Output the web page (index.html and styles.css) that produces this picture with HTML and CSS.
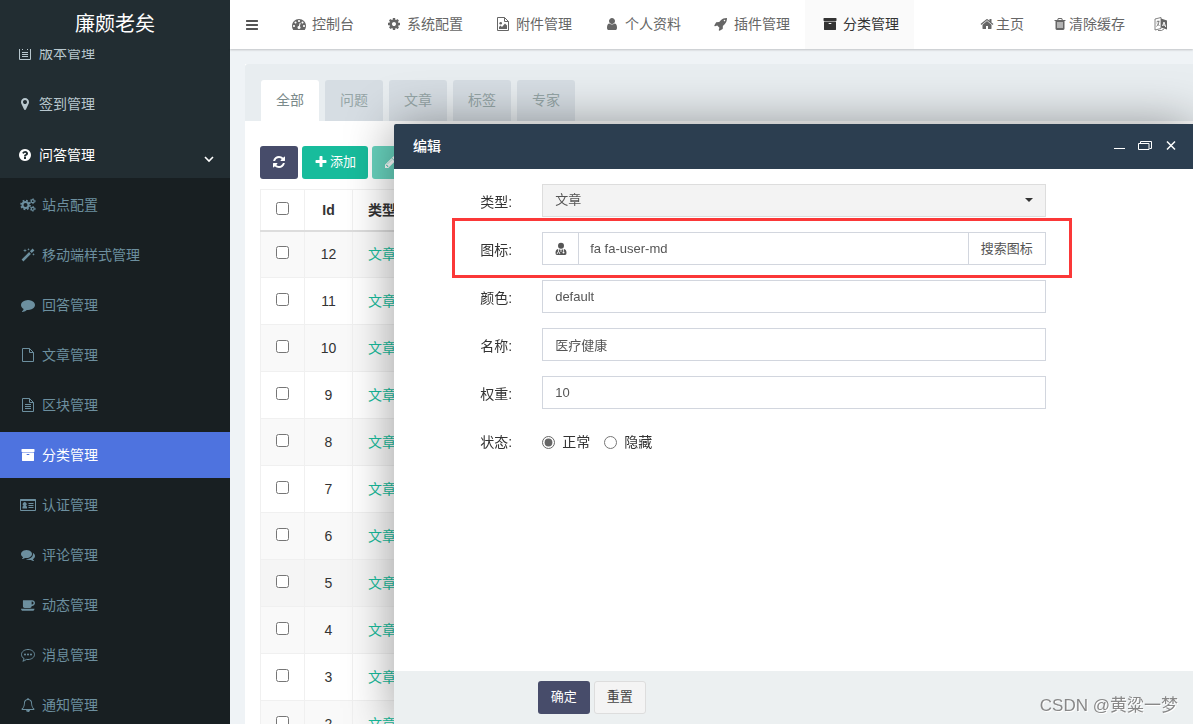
FILE: index.html
```html
<!DOCTYPE html>
<html lang="zh-CN">

<head>
    <meta charset="UTF-8">
    <meta name="viewport" content="width=device-width, initial-scale=1.0">
    <title>分类管理</title>
    <link rel="stylesheet" href="styles.css">
</head>

<body>
    <!-- Icon sprite -->
    <svg class="sprite" aria-hidden="true">
        <symbol id="i-bars" viewBox="0 0 1792 1792"><path d="M1664 1344v128q0 26-19 45t-45 19h-1408q-26 0-45-19t-19-45v-128q0-26 19-45t45-19h1408q26 0 45 19t19 45zm0-512v128q0 26-19 45t-45 19h-1408q-26 0-45-19t-19-45v-128q0-26 19-45t45-19h1408q26 0 45 19t19 45zm0-512v128q0 26-19 45t-45 19h-1408q-26 0-45-19t-19-45v-128q0-26 19-45t45-19h1408q26 0 45 19t19 45z"/></symbol>
        <symbol id="i-plus" viewBox="0 0 1792 1792"><path d="M1600 736v192q0 40-28 68t-68 28h-416v416q0 40-28 68t-68 28h-192q-40 0-68-28t-28-68v-416h-416q-40 0-68-28t-28-68v-192q0-40 28-68t68-28h416v-416q0-40 28-68t68-28h192q40 0 68 28t28 68v416h416q40 0 68 28t28 68z"/></symbol>
        <symbol id="i-refresh" viewBox="0 0 1792 1792"><path d="M1639 1056q0 5-1 7-64 268-268 434.5t-478 166.5q-146 0-282.5-55t-243.5-157l-129 129q-19 19-45 19t-45-19-19-45v-448q0-26 19-45t45-19h448q26 0 45 19t19 45-19 45l-137 137q71 66 161 102t187 36q134 0 250-65t186-179q11-17 53-117 8-23 30-23h192q13 0 22.5 9.5t9.5 22.5zm25-800v448q0 26-19 45t-45 19h-448q-26 0-45-19t-19-45 19-45l138-138q-148-137-349-137-134 0-250 65t-186 179q-11 17-53 117-8 23-30 23h-199q-13 0-22.5-9.5t-9.5-22.5v-7q65-268 270-434.5t480-166.5q146 0 284 55.5t245 156.5l130-129q19-19 45-19t45 19 19 45z"/></symbol>
        <symbol id="i-pencil" viewBox="0 0 1792 1792"><path d="M491 1536l91-91-235-235-91 91v107h128v128h107zm523-928q0-22-22-22-10 0-17 7l-542 542q-7 7-7 17 0 22 22 22 10 0 17-7l542-542q7-7 7-17zm-54-192l416 416-832 832h-416v-416zm683 96q0 53-37 90l-166 166-416-416 166-165q36-38 90-38 53 0 91 38l235 234q37 39 37 91z"/></symbol>
        <symbol id="i-home" viewBox="0 0 1792 1792"><path d="M1472 992v480q0 26-19 45t-45 19h-384v-384h-256v384h-384q-26 0-45-19t-19-45v-480q0-1 .5-3t.5-3l575-474 575 474q1 2 1 6zm223-69l-62 74q-8 9-21 11h-3q-13 0-21-7l-692-577-692 577q-12 8-24 7-13-2-21-11l-62-74q-8-10-7-23.5t11-21.5l719-599q32-26 76-26t76 26l244 204v-195q0-14 9-23t23-9h192q14 0 23 9t9 23v408l219 182q10 8 11 21.5t-7 23.5z"/></symbol>
        <symbol id="i-cog" viewBox="0 0 1792 1792"><path d="M1152 896q0-106-75-181t-181-75-181 75-75 181 75 181 181 75 181-75 75-181zm512-109v222q0 12-8 23t-20 13l-185 28q-19 54-39 91 35 50 107 138 10 12 10 25t-9 23q-27 37-99 108t-94 71q-12 0-26-9l-138-108q-44 23-91 38-16 136-29 186-7 28-36 28h-222q-14 0-24.5-8.5t-11.5-21.5l-28-184q-49-16-90-37l-141 107q-10 9-25 9-14 0-25-11-126-114-165-168-7-10-7-23 0-12 8-23 15-21 51-66.5t54-70.5q-27-50-41-99l-183-27q-13-2-21-12.5t-8-23.5v-222q0-12 8-23t19-13l186-28q14-46 39-92-40-57-107-138-10-12-10-24 0-10 9-23 26-36 98.5-107.5t94.5-71.5q13 0 26 10l138 107q44-23 91-38 16-136 29-186 7-28 36-28h222q14 0 24.5 8.5t11.5 21.5l28 184q49 16 90 37l142-107q9-9 24-9 13 0 25 10 129 119 165 170 7 8 7 22 0 12-8 23-15 21-51 66.5t-54 70.5q26 50 41 98l183 28q13 2 21 12.5t8 23.5z"/></symbol>
        <symbol id="i-marker" viewBox="0 0 1792 1792"><path d="M1152 640q0-106-75-181t-181-75-181 75-75 181 75 181 181 75 181-75 75-181zm256 0q0 109-33 179l-364 774q-16 33-47.5 52t-67.5 19-67.5-19-46.5-52l-365-774q-33-70-33-179 0-212 150-362t362-150 362 150 150 362z"/></symbol>
        <symbol id="i-archive" viewBox="0 0 1792 1792"><path d="M1088 832q0-26-19-45t-45-19h-256q-26 0-45 19t-19 45 19 45 45 19h256q26 0 45-19t19-45zm576-192v960q0 26-19 45t-45 19h-1408q-26 0-45-19t-19-45v-960q0-26 19-45t45-19h1408q26 0 45 19t19 45zm64-448v256q0 26-19 45t-45 19h-1536q-26 0-45-19t-19-45v-256q0-26 19-45t45-19h1536q26 0 45 19t19 45z"/></symbol>
        <symbol id="i-comment" viewBox="0 0 1792 1792"><path d="M1792 896q0 174-120 321.5t-326 233-450 85.5q-70 0-145-8-198 175-460 242-49 14-114 22-17 2-30.5-9t-17.5-29v-1q-3-4-.5-12t2-10 4.5-9.5l6-9 7-8.5 8-9q7-8 31-34.5t34.5-38 31-39.5 32.5-51 27-59 26-76q-157-89-247.5-220t-90.5-281q0-130 71-248.5t191-204.5 286-136.5 348-50.5q244 0 450 85.5t326 233 120 321.5z"/></symbol>
        <symbol id="i-comments" viewBox="0 0 1792 1792"><path d="M1408 768q0 139-94 257t-256.5 186.5-353.5 68.5q-86 0-176-16-124 88-278 128-36 9-86 16h-3q-11 0-20.5-8t-11.5-21q-1-3-1-6.5t.5-6.5 2-6l2.5-5 3.5-5.5 4-5 4.5-5 4-4.5q5-6 23-25t26-29.5 22.5-29 25-38.5 20.5-44q-124-72-195-177t-71-224q0-139 94-257t256.5-186.5 353.5-68.5 353.5 68.5 256.5 186.5 94 257zm384 256q0 120-71 224.5t-195 176.5q10 24 20.5 44t25 38.5 22.5 29 26 29.5 23 25q1 1 4 4.5t4.5 5 4 5 3.5 5.5l2.5 5 2 6 .5 6.5-1 6.5q-3 14-13 22t-22 7q-50-7-86-16-154-40-278-128-90 16-176 16-271 0-472-132 58 4 88 4 161 0 309-45t264-129q125-92 192-212t67-254q0-77-23-152 129 71 204 178t75 230z"/></symbol>
        <symbol id="i-user" viewBox="0 0 1792 1792"><path d="M1536 1399q0 109-62.5 187t-150.5 78h-854q-88 0-150.5-78t-62.5-187q0-85 8.5-160.5t31.5-152 58.5-131 94-89 134.5-34.5q131 128 313 128t313-128q76 0 134.5 34.5t94 89 58.5 131 31.5 152 8.5 160.5zm-256-887q0 159-112.5 271.5t-271.5 112.5-271.5-112.5-112.5-271.5 112.5-271.5 271.5-112.5 271.5 112.5 112.5 271.5z"/></symbol>
        <symbol id="i-question" viewBox="0 0 1792 1792"><path d="M1024 1376v-192q0-14-9-23t-23-9h-192q-14 0-23 9t-9 23v192q0 14 9 23t23 9h192q14 0 23-9t9-23zm256-672q0-88-55.5-163t-138.5-116-170-41q-243 0-371 213-15 24 8 42l132 100q7 6 19 6 16 0 25-12 53-68 86-92 34-24 86-24 48 0 85.5 26t37.5 59q0 38-20 61t-68 45q-63 28-115.5 86.5t-52.5 125.5v36q0 14 9 23t23 9h192q14 0 23-9t9-23q0-19 21.5-49.5t54.5-49.5q32-18 49-28.5t46-35 44.5-48 28-60.5 12.5-81zm384 192q0 209-103 385.5t-279.5 279.5-385.5 103-385.5-103-279.5-279.5-103-385.5 103-385.5 279.5-279.5 385.5-103 385.5 103 279.5 279.5 103 385.5z"/></symbol>
        <symbol id="i-dashboard" viewBox="0 0 1792 1792"><path d="M384 1152q0-53-37.5-90.5t-90.5-37.5-90.5 37.5-37.5 90.5 37.5 90.5 90.5 37.5 90.5-37.5 37.5-90.5zm192-448q0-53-37.5-90.5t-90.5-37.5-90.5 37.5-37.5 90.5 37.5 90.5 90.5 37.5 90.5-37.5 37.5-90.5zm428 481l101-382q6-26-7.5-48.5t-38.5-29.5-48 6.5-30 39.5l-101 382q-60 5-107 43.5t-63 98.5q-20 77 20 146t117 89 146-20 89-117q16-60-6-117t-72-91zm660-33q0-53-37.5-90.5t-90.5-37.5-90.5 37.5-37.5 90.5 37.5 90.5 90.5 37.5 90.5-37.5 37.5-90.5zm-640-640q0-53-37.5-90.5t-90.5-37.5-90.5 37.5-37.5 90.5 37.5 90.5 90.5 37.5 90.5-37.5 37.5-90.5zm448 192q0-53-37.5-90.5t-90.5-37.5-90.5 37.5-37.5 90.5 37.5 90.5 90.5 37.5 90.5-37.5 37.5-90.5zm320 448q0 261-141 483-19 29-54 29h-1402q-35 0-54-29-141-221-141-483 0-182 71-348t191-286 286-191 348-71 348 71 286 191 191 286 71 348z"/></symbol>
        <symbol id="i-rocket" viewBox="0 0 1792 1792"><path d="M1440 448q0-40-28-68t-68-28-68 28-28 68 28 68 68 28 68-28 28-68zm224-288q0 249-75.5 430.5t-253.5 360.5q-81 80-195 176l-20 379q-2 16-16 26l-384 224q-7 4-16 4-12 0-23-9l-64-64q-13-14-8-32l85-276-281-281-276 85q-3 1-9 1-14 0-23-9l-64-64q-17-19-5-39l224-384q10-14 26-16l379-20q96-114 176-195 188-187 358-258t431-71q14 0 24 9.5t10 22.5z"/></symbol>
        <symbol id="i-bell" viewBox="0 0 1792 1792"><path d="M912 1696q0-16-16-16-59 0-101.5-42.5t-42.5-101.5q0-16-16-16t-16 16q0 73 51.5 124.5t124.5 51.5q16 0 16-16zm-666-288h1300q-266-300-266-832 0-51-24-105t-69-103-121.5-80.5-169.5-31.5-169.5 31.5-121.5 80.5-69 103-24 105q0 532-266 832zm1482 0q0 52-38 90t-90 38h-448q0 106-75 181t-181 75-181-75-75-181h-448q-52 0-90-38t-38-90q50-42 91-88t85-119.5 74.5-158.5 50-206 19.5-260q0-152 117-282.5t307-158.5q-8-19-8-39 0-40 28-68t68-28 68 28 28 68q0 20-8 39 190 28 307 158.5t117 282.5q0 139 19.5 260t50 206 74.5 158.5 85 119.5 91 88z"/></symbol>
        <symbol id="i-coffee" viewBox="0 0 1856 1792"><path d="M1664 640q0-80-56-136t-136-56h-64v384h64q80 0 136-56t56-136zm-1664 768h1792q0 106-75 181t-181 75h-1280q-106 0-181-75t-75-181zm1856-768q0 159-112.5 271.5t-271.5 112.5h-64v32q0 92-66 158t-158 66h-704q-92 0-158-66t-66-158v-736q0-26 19-45t45-19h1152q159 0 271.5 112.5t112.5 271.5z"/></symbol>
        <symbol id="i-trash" viewBox="0 0 1792 1792"><path d="M704 1376v-704q0-14-9-23t-23-9h-64q-14 0-23 9t-9 23v704q0 14 9 23t23 9h64q14 0 23-9t9-23zm256 0v-704q0-14-9-23t-23-9h-64q-14 0-23 9t-9 23v704q0 14 9 23t23 9h64q14 0 23-9t9-23zm256 0v-704q0-14-9-23t-23-9h-64q-14 0-23 9t-9 23v704q0 14 9 23t23 9h64q14 0 23-9t9-23zm-544-992h448l-48-117q-7-9-17-11h-317q-10 2-17 11zm928 32v64q0 14-9 23t-23 9h-96v948q0 83-47 143.5t-113 60.5h-832q-66 0-113-58.5t-47-141.5v-952h-96q-14 0-23-9t-9-23v-64q0-14 9-23t23-9h309l70-167q15-37 54-63t79-26h320q40 0 79 26t54 63l70 167h309q14 0 23 9t9 23z"/></symbol>
        <symbol id="i-file" viewBox="0 0 14 14"><path fill="none" stroke="currentColor" d="M1.500.5h7l4 4v9h-11zM8.500.5v4h4"/></symbol>
        <symbol id="i-file-text" viewBox="0 0 14 14"><path fill="none" stroke="currentColor" d="M1.500.5h7l4 4v9h-11zM8.500.5v4h4M4 6.500h6M4 8.500h6M4 10.500h6"/></symbol>
        <symbol id="i-file-image" viewBox="0 0 14 14"><path fill="none" stroke="currentColor" d="M1.500.5h7l4 4v9h-11zM8.500.5v4h4"/><circle cx="4.700" cy="6.200" r="1.300"/><path d="M3 12v-2l1.500-1.500L6 10l3-3.500 2 2V12z"/></symbol>
        <symbol id="i-list" viewBox="0 0 14 14"><path fill="none" stroke="currentColor" d="M1.500 2.500h11v11h-11zM4 6.500h6M4 8.500h6M4 10.500h6M4.500 1v3M9.500 1v3"/></symbol>
        <symbol id="i-cogs" viewBox="0 0 16 14"><g fill="none" stroke="currentColor"><circle cx="5.500" cy="7" r="3" stroke-width="2"/><circle cx="5.500" cy="7" r="4.500" stroke-width="1.600" stroke-dasharray="1.800 1.734"/><circle cx="12.700" cy="3.200" r="1.500" stroke-width="1.200"/><circle cx="12.700" cy="3.200" r="2.400" stroke-width="1" stroke-dasharray="1.200 1.313"/><circle cx="12.700" cy="10.800" r="1.500" stroke-width="1.200"/><circle cx="12.700" cy="10.800" r="2.400" stroke-width="1" stroke-dasharray="1.200 1.313"/></g></symbol>
        <symbol id="i-magic" viewBox="0 0 14 14"><path fill="none" stroke="currentColor" stroke-width="2.600" d="M1.500 12.500l7.500-7.500M9.800 4.200l2.700-2.700"/><path d="M4 .5l.5 1.500 1.500.5-1.500.5L4 4.500 3.500 3 2 2.500 3.500 2zM7.500 0l.4.900.9.400-.9.400-.4.900-.4-.9-.9-.4.900-.4zM12.500 5l.4 1 1 .4-1 .4-.4 1-.4-1-1-.4 1-.4z"/></symbol>
        <symbol id="i-commenting" viewBox="0 0 14 14"><path fill="none" stroke="currentColor" d="M7 1.500c3.600 0 6.500 2.200 6.500 5s-2.900 5-6.500 5l-1.600-.1C4.200 12.300 3 13 1.800 13.200c.7-.7 1.200-1.500 1.300-2.600C1.500 9.800.5 8.200.5 6.500c0-2.800 2.900-5 6.500-5z"/><circle cx="4" cy="6.500" r="1"/><circle cx="7" cy="6.500" r="1"/><circle cx="10" cy="6.500" r="1"/></symbol>
        <symbol id="i-card" viewBox="0 0 16 14"><path fill="none" stroke="currentColor" d="M.5 1.500h15v11H.5zM8.500 5.500h5M8.500 7.500h5M8.500 9.500h5"/><path d="M.5 1h15v2H.5zM2.500 10.500V9q0-1 1.300-1.200a1.900 1.900 0 1 1 1.800 0Q7 8 7 9v1.500z"/></symbol>
        <symbol id="i-user-md" viewBox="0 0 14 14"><circle cx="7" cy="3.700" r="3"/><path d="M4 7l3 1 3-1q2.500.5 2.500 4 0 2-1.500 2H3q-1.500 0-1.500-2 0-3.500 2.500-4z"/><path fill="none" stroke="#fff" stroke-width=".8" d="M4.500 7v3M3.300 12v-1q0-1 1.200-1t1.200 1v1M9.500 7v2.500M7 8v2"/><circle cx="9.500" cy="10.500" r="1" fill="#fff"/></symbol>
        <symbol id="i-language" viewBox="0 0 14 14"><path fill="none" stroke="currentColor" stroke-width=".8" d="M1 2l6-1.500v11L1 13zM2.500 5l3-.8M4 3.500v1.200M2.500 9.500q2-1.500 2.500-5M3 6.500l2.500 2.500M4 13.500q4 .8 6-1.500"/><path d="M7 1.500l6 2v9l-6-2z"/><path fill="none" stroke="#fff" stroke-width=".9" d="M8.500 9L10 5l1.700 5M9 7.800l2.300.6"/></symbol>
        <symbol id="i-chevron" viewBox="0 0 10 10"><path fill="none" stroke="currentColor" stroke-width="1.600" d="M1 3l4 4 4-4"/></symbol>
        <symbol id="i-min" viewBox="0 0 14 14"><path fill="none" stroke="currentColor" d="M2 9.500h11"/></symbol>
        <symbol id="i-restore" viewBox="0 0 14 14"><path fill="none" stroke="currentColor" d="M.5 4.500h10.500v6H.5zM2.500 4V2.500h11v7H11.500"/></symbol>
        <symbol id="i-close" viewBox="0 0 14 14"><path fill="none" stroke="currentColor" stroke-width="1.500" d="M3 2.500l8 8M11 2.500l-8 8"/></symbol>
    </svg>

    <div class="wrapper">
        <!-- Sidebar -->
        <aside class="sidebar">
            <a href="#" class="logo">廉颇老矣</a>
            <nav class="menu">
                <a href="#" class="menu-item"><svg class="icon"><use href="#i-list"/></svg>版本管理</a>
                <a href="#" class="menu-item"><svg class="icon"><use href="#i-marker"/></svg>签到管理</a>
                <a href="#" class="menu-item open"><svg class="icon"><use href="#i-question"/></svg>问答管理<svg class="arrow"><use href="#i-chevron"/></svg></a>
                <div class="submenu">
                    <a href="#" class="menu-item"><svg class="icon icon-wide"><use href="#i-cogs"/></svg>站点配置</a>
                    <a href="#" class="menu-item"><svg class="icon"><use href="#i-magic"/></svg>移动端样式管理</a>
                    <a href="#" class="menu-item"><svg class="icon"><use href="#i-comment"/></svg>回答管理</a>
                    <a href="#" class="menu-item"><svg class="icon"><use href="#i-file"/></svg>文章管理</a>
                    <a href="#" class="menu-item"><svg class="icon"><use href="#i-file-text"/></svg>区块管理</a>
                    <a href="#" class="menu-item active"><svg class="icon"><use href="#i-archive"/></svg>分类管理</a>
                    <a href="#" class="menu-item"><svg class="icon icon-wide"><use href="#i-card"/></svg>认证管理</a>
                    <a href="#" class="menu-item"><svg class="icon"><use href="#i-comments"/></svg>评论管理</a>
                    <a href="#" class="menu-item"><svg class="icon"><use href="#i-coffee"/></svg>动态管理</a>
                    <a href="#" class="menu-item"><svg class="icon"><use href="#i-commenting"/></svg>消息管理</a>
                    <a href="#" class="menu-item"><svg class="icon"><use href="#i-bell"/></svg>通知管理</a>
                </div>
            </nav>
        </aside>

        <div class="main">
            <!-- Top bar -->
            <header class="navbar">
                <button type="button" class="nav-toggle" aria-label="菜单"><svg class="icon"><use href="#i-bars"/></svg></button>
                <nav class="nav-tabs">
                    <a href="#" class="nav-link"><svg class="icon"><use href="#i-dashboard"/></svg>控制台</a>
                    <a href="#" class="nav-link"><svg class="icon"><use href="#i-cog"/></svg>系统配置</a>
                    <a href="#" class="nav-link"><svg class="icon"><use href="#i-file-image"/></svg>附件管理</a>
                    <a href="#" class="nav-link"><svg class="icon"><use href="#i-user"/></svg>个人资料</a>
                    <a href="#" class="nav-link"><svg class="icon"><use href="#i-rocket"/></svg>插件管理</a>
                    <a href="#" class="nav-link active"><svg class="icon"><use href="#i-archive"/></svg>分类管理</a>
                </nav>
                <div class="nav-right">
                    <a href="#" class="nav-link"><svg class="icon"><use href="#i-home"/></svg>主页</a>
                    <a href="#" class="nav-link"><svg class="icon"><use href="#i-trash"/></svg>清除缓存</a>
                    <a href="#" class="nav-link" aria-label="语言"><svg class="icon"><use href="#i-language"/></svg></a>
                </div>
            </header>

            <!-- List panel -->
            <section class="panel">
                <div class="panel-heading">
                    <a href="#" class="tab active">全部</a>
                    <a href="#" class="tab">问题</a>
                    <a href="#" class="tab">文章</a>
                    <a href="#" class="tab">标签</a>
                    <a href="#" class="tab">专家</a>
                </div>
                <div class="panel-body">
                    <div class="toolbar">
                        <button type="button" class="btn btn-primary" aria-label="刷新"><svg class="icon"><use href="#i-refresh"/></svg></button>
                        <button type="button" class="btn btn-success"><svg class="icon"><use href="#i-plus"/></svg>添加</button>
                        <button type="button" class="btn btn-success" aria-label="编辑" disabled><svg class="icon"><use href="#i-pencil"/></svg></button>
                    </div>
                    <table class="table">
                        <thead>
                            <tr><th class="col-check"><input type="checkbox" aria-label="全选"></th><th class="col-id">Id</th><th class="col-type">类型</th></tr>
                        </thead>
                        <tbody>
                            <tr><td><input type="checkbox" aria-label="12"></td><td>12</td><td class="col-type"><a href="#">文章</a></td></tr>
                            <tr><td><input type="checkbox" aria-label="11"></td><td>11</td><td class="col-type"><a href="#">文章</a></td></tr>
                            <tr><td><input type="checkbox" aria-label="10"></td><td>10</td><td class="col-type"><a href="#">文章</a></td></tr>
                            <tr><td><input type="checkbox" aria-label="9"></td><td>9</td><td class="col-type"><a href="#">文章</a></td></tr>
                            <tr><td><input type="checkbox" aria-label="8"></td><td>8</td><td class="col-type"><a href="#">文章</a></td></tr>
                            <tr><td><input type="checkbox" aria-label="7"></td><td>7</td><td class="col-type"><a href="#">文章</a></td></tr>
                            <tr><td><input type="checkbox" aria-label="6"></td><td>6</td><td class="col-type"><a href="#">文章</a></td></tr>
                            <tr class="hover"><td><input type="checkbox" aria-label="5"></td><td>5</td><td class="col-type"><a href="#">文章</a></td></tr>
                            <tr><td><input type="checkbox" aria-label="4"></td><td>4</td><td class="col-type"><a href="#">文章</a></td></tr>
                            <tr><td><input type="checkbox" aria-label="3"></td><td>3</td><td class="col-type"><a href="#">文章</a></td></tr>
                            <tr><td><input type="checkbox" aria-label="2"></td><td>2</td><td class="col-type"><a href="#">文章</a></td></tr>
                        </tbody>
                    </table>
                </div>
            </section>
        </div>
    </div>

    <!-- Edit window -->
    <form class="dialog">
        <div class="dialog-title">
            <span>编辑</span>
            <div class="dialog-tools">
                <button type="button" aria-label="最小化"><svg class="icon"><use href="#i-min"/></svg></button>
                <button type="button" aria-label="还原"><svg class="icon"><use href="#i-restore"/></svg></button>
                <button type="button" aria-label="关闭"><svg class="icon"><use href="#i-close"/></svg></button>
            </div>
        </div>
        <div class="dialog-body">
            <div class="form-row">
                <label for="type">类型:</label>
                <div class="select-wrap">
                    <select id="type" class="form-control"><option>文章</option></select>
                </div>
            </div>
            <div class="form-row marked">
                <label for="icon">图标:</label>
                <div class="input-group">
                    <span class="addon"><svg class="icon"><use href="#i-user-md"/></svg></span>
                    <input type="text" id="icon" class="form-control" value="fa fa-user-md">
                    <button type="button" class="addon-btn">搜索图标</button>
                </div>
            </div>
            <div class="form-row">
                <label for="color">颜色:</label>
                <input type="text" id="color" class="form-control" value="default">
            </div>
            <div class="form-row">
                <label for="name">名称:</label>
                <input type="text" id="name" class="form-control" value="医疗健康">
            </div>
            <div class="form-row">
                <label for="weigh">权重:</label>
                <input type="text" id="weigh" class="form-control" value="10">
            </div>
            <div class="form-row">
                <span class="row-label">状态:</span>
                <div class="radios">
                    <label><input type="radio" name="status" checked>正常</label>
                    <label><input type="radio" name="status">隐藏</label>
                </div>
            </div>
        </div>
        <div class="dialog-footer">
            <button type="submit" class="btn btn-primary">确定</button>
            <button type="reset" class="btn btn-default">重置</button>
        </div>
    </form>

    <div class="watermark">CSDN @黄粱一梦</div>
</body>

</html>
```
FILE: styles.css
```css
* {
    box-sizing: border-box;
}

body {
    margin: 0;
    font-family: "Liberation Sans", "Noto Sans CJK SC", sans-serif;
    font-size: 14px;
    line-height: 20px;
    color: #333;
    background: #eff3f6;
    overflow: hidden;
}

a {
    color: #18bc9c;
    text-decoration: none;
}

button,
input,
select {
    font-family: inherit;
    font-size: 13px;
}

button {
    cursor: pointer;
}

.sprite {
    display: none;
}

.icon {
    width: 14px;
    height: 14px;
    flex: none;
    fill: currentColor;
}

.wrapper {
    display: flex;
    height: 100vh;
    overflow: hidden;
}

/* Sidebar */
.sidebar {
    width: 230px;
    flex: none;
    background: #222d32;
    overflow: hidden;
}

.logo {
    display: block;
    position: relative;
    z-index: 1;
    height: 49px;
    line-height: 48px;
    text-align: center;
    font-size: 20px;
    color: #fff;
    background: #222d32;
}

/* the list is scrolled a little under the logo */
.menu {
    display: flex;
    flex-direction: column;
    gap: 5px;
    margin-top: -19px;
}

.menu-item {
    display: flex;
    align-items: center;
    gap: 7px;
    height: 46px;
    flex: none;
    padding: 0 16px 0 18px;
    color: #b8c7ce;
}

.menu-item.open {
    color: #fff;
}

.arrow {
    width: 10px;
    height: 10px;
    margin: 8px 0 0 auto;
}

.submenu {
    display: flex;
    flex-direction: column;
    gap: 4px;
    margin-top: -5px;
    padding-top: 4px;
    background: #181f22;
}

.submenu .menu-item {
    padding-left: 21px;
    color: #6c8f9f;
}

.submenu .menu-item.active {
    color: #fff;
    background: #4e73df;
}

.icon-wide {
    width: 16px;
    margin: 0 -1px;
}

/* Top bar */
.main {
    flex: 1;
    min-width: 0;
}

.navbar {
    display: flex;
    height: 49px;
    background: #fff;
    box-shadow: 0 1px 2px rgba(0, 0, 0, 0.2);
}

.nav-toggle {
    padding: 0 15px;
    border: none;
    background: none;
    color: #555;
    line-height: 0;
}

.nav-tabs,
.nav-right {
    display: flex;
}

.nav-right {
    margin-left: auto;
    padding-right: 10px;
}

.nav-link {
    display: flex;
    align-items: center;
    gap: 6px;
    padding: 0 15px 2px 18px;
    color: #666;
    white-space: nowrap;
}

.nav-right .nav-link {
    gap: 2px;
    padding: 0 15px 2px 14px;
}

.nav-link.active {
    color: #333;
    background: #fafafa;
}

/* Panel */
.panel {
    margin: 15px 0 0 15px;
    background: #fff;
}

.panel-heading {
    display: flex;
    gap: 6px;
    padding: 16px 16px 0;
    background: #e8edf0;
    border-radius: 3px 0 0 0;
}

.tab {
    height: 41px;
    padding: 0 15px;
    line-height: 40px;
    color: #95a5a6;
    background: #d6dde3;
    border-radius: 3px 3px 0 0;
}

.tab.active {
    color: #7b8a8b;
    background: #fff;
}

.panel-body {
    padding: 25px 15px;
}

.toolbar {
    display: flex;
    gap: 4px;
    margin-bottom: 10px;
}

.btn {
    display: flex;
    align-items: center;
    gap: 2px;
    height: 33px;
    padding: 0 13px 2px;
    border: none;
    border-radius: 3px;
    line-height: 20px;
}

.toolbar .btn {
    padding: 0 12px 2px;
}

.btn-primary {
    color: #fff;
    background: #474c6a;
}

.btn-success {
    color: #fff;
    background: #18bc9c;
}

.btn-success:disabled {
    opacity: 0.65;
}

.btn-default {
    padding: 0 12px 2px;
    color: #444;
    background: #f4f4f4;
    border: 1px solid #ddd;
}

.table {
    width: 100%;
    border-collapse: collapse;
    text-align: center;
}

.table th,
.table td {
    height: 47px;
    padding: 0;
    border: 1px solid #f0f0f0;
}

.table th {
    height: 41px;
    border-bottom: 2px solid #ddd;
}

.table input {
    display: block;
    margin: 0 auto 3px;
}

.table tbody tr:nth-child(odd) {
    background: #f9f9f9;
}

.table tbody tr.hover {
    background: #f5f5f5;
}

.col-check {
    width: 44px;
}

.col-id {
    width: 48px;
}

.table .col-type {
    padding-left: 15px;
    text-align: left;
}

/* Edit window, floats over the list */
.dialog {
    position: fixed;
    top: 124px;
    right: 0;
    bottom: 0;
    left: 394px;
    display: flex;
    flex-direction: column;
    background: #fff;
    border-radius: 2px;
    box-shadow: 1px 1px 50px rgba(0, 0, 0, 0.4);
}

.dialog-title {
    display: flex;
    align-items: center;
    justify-content: space-between;
    height: 45px;
    flex: none;
    padding: 0 15px 2px 19px;
    font-weight: 500;
    color: #fff;
    background: #2c3e50;
    border-radius: 2px 0 0 0;
}

.dialog-tools {
    display: flex;
    gap: 12px;
}

.dialog-tools button {
    padding: 0;
    border: none;
    background: none;
    color: #fff;
    line-height: 0;
}

.dialog-body {
    flex: 1;
    display: flex;
    flex-direction: column;
    gap: 15px;
    padding-top: 15px;
}

/* label / field / spare column */
.form-row {
    position: relative;
    display: grid;
    grid-template-columns: 1fr 4fr 1fr;
}

.form-row > label,
.form-row > .row-label {
    padding: 8px 15px 0 0;
    text-align: right;
    height: 33px;
}

.form-row > :nth-child(2) {
    margin: 0 14px 0 15px;
}

.marked::after {
    content: "";
    position: absolute;
    top: -14px;
    right: 121px;
    bottom: -13px;
    left: 58px;
    border: 3px solid #fb3838;
    pointer-events: none;
}

.form-control {
    height: 33px;
    min-width: 0;
    padding: 0 12px;
    border: 1px solid #d2d6de;
    border-radius: 0;
    color: #555;
    background: #fff;
    outline: none;
}

.select-wrap {
    position: relative;
}

.select-wrap .form-control {
    width: 100%;
    padding-bottom: 2px;
    appearance: none;
    background: #f3f3f3;
    border-color: #ddd;
}

.select-wrap::after {
    content: "";
    position: absolute;
    top: 14px;
    right: 13px;
    border: 4px solid transparent;
    border-top-color: #333;
    border-bottom: none;
    pointer-events: none;
}

.input-group {
    display: flex;
}

.input-group .form-control {
    flex: 1;
    padding: 0 11px;
}

.addon,
.addon-btn {
    display: flex;
    align-items: center;
    padding: 0 12px 2px;
    border: 1px solid #d2d6de;
    color: #555;
    background: #fff;
}

.addon {
    padding: 0 10px 0 11px;
    border-right: none;
}

.addon-btn {
    border-left: none;
}

.radios {
    display: flex;
    gap: 14px;
    padding-top: 8px;
}

.radios label {
    display: flex;
    align-items: center;
    gap: 7px;
    height: 20px;
}

.radios input {
    margin: 0;
    accent-color: #666;
}

.dialog-footer {
    display: flex;
    gap: 4px;
    flex: none;
    padding: 10px 18%;
    background: #ecf0f1;
}

.watermark {
    position: fixed;
    right: 15px;
    bottom: 8px;
    font-size: 17px;
    color: #888;
    text-shadow: 1px 1px 0 #fff;
}
```
